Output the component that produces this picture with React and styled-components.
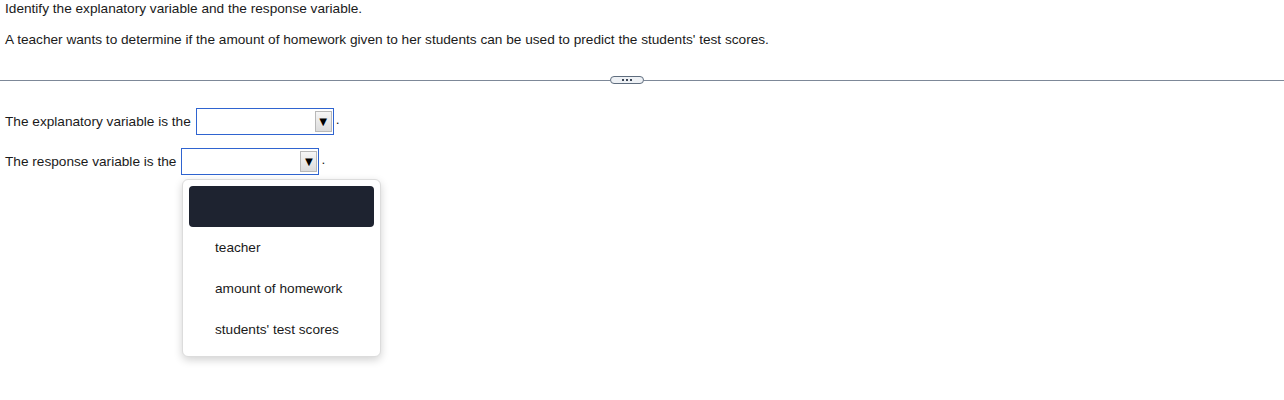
import React from 'react';
import styled, {createGlobalStyle} from 'styled-components';

const GlobalStyle = createGlobalStyle`
  body {
    margin: 0;
    background: #fff;
    font-family: "Liberation Sans", Arial, sans-serif;
    font-size: 13.65px;
    color: #1a1a1a;
  }
`;

const Page = styled.div`
  width: 1284px;
  height: 400px;
  overflow: hidden;
`;

const Question = styled.div`
  padding: 1px 5px 0;
`;

const Line = styled.p`
  margin: 0 0 ${p => p.gap || 0}px;
  line-height: 15px;
`;

const Divider = styled.div`
  display: flex;
  align-items: center;
  margin-top: 29px;
  height: 8px;
`;

const Rule = styled.div`
  flex: ${p => (p.fixed ? `0 0 ${p.fixed}px` : 1)};
  height: 1px;
  background: #7d8898;
`;

const Pill = styled.button`
  width: 34px;
  height: 8px;
  padding: 0;
  border: 1px solid #5f6d7e;
  border-radius: 5px;
  background: #eef1f5;
  display: flex;
  align-items: center;
  justify-content: center;
  gap: 2px;
`;

const Dot = styled.span`
  width: 2px;
  height: 2px;
  background: #3c4757;
`;

const Answers = styled.div`
  padding: 24px 5px 0;
  display: flex;
  flex-direction: column;
  gap: 13px;
`;

const Row = styled.div`
  display: flex;
  align-items: center;
  position: relative;
`;

const Label = styled.span`
  margin-right: 5px;
`;

const Select = styled.div`
  width: 135px;
  height: 25px;
  border: 1px solid #2f64d0;
  display: flex;
  align-items: center;
  justify-content: flex-end;
  padding-right: 1px;
`;

const Arrow = styled.div`
  width: 15px;
  height: 19px;
  border: 1px solid #b8b8b8;
  background: linear-gradient(#f6f6f6, #dcdcdc);
  display: flex;
  align-items: center;
  justify-content: center;
  font-size: 13px;
  color: #000;
`;

const Period = styled.span`
  margin-left: 2px;
  align-self: flex-end;
  margin-bottom: 8px;
`;

const Menu = styled.div`
  position: absolute;
  left: 177px;
  top: 31px;
  width: 199px;
  padding: 6px 6px 0;
  box-sizing: border-box;
  height: 178px;
  background: #fff;
  border: 1px solid #dcdcdc;
  border-radius: 6px;
  box-shadow: 0 3px 8px rgba(0, 0, 0, 0.18);
`;

const Highlight = styled.div`
  height: 41px;
  border-radius: 4px;
  background: #1e2330;
`;

const Option = styled.div`
  height: 41px;
  line-height: 41px;
  padding-left: 26px;
  color: #1a1a1a;
`;

const options = ['teacher', 'amount of homework', "students' test scores"];

export default function App() {
  return (
    <Page>
      <GlobalStyle />
      <Question>
        <Line gap={16}>Identify the explanatory variable and the response variable.</Line>
        <Line>A teacher wants to determine if the amount of homework given to her students can be used to predict the students' test scores.</Line>
      </Question>
      <Divider>
        <Rule fixed={610} />
        <Pill><Dot /><Dot /><Dot /></Pill>
        <Rule />
      </Divider>
      <Answers>
        <Row>
          <Label>The explanatory variable is the</Label>
          <Select><Arrow>▼</Arrow></Select>
          <Period>.</Period>
        </Row>
        <Row>
          <Label>The response variable is the</Label>
          <Select><Arrow>▼</Arrow></Select>
          <Period>.</Period>
          <Menu>
            <Highlight />
            {options.map(o => <Option key={o}>{o}</Option>)}
          </Menu>
        </Row>
      </Answers>
    </Page>
  );
}
